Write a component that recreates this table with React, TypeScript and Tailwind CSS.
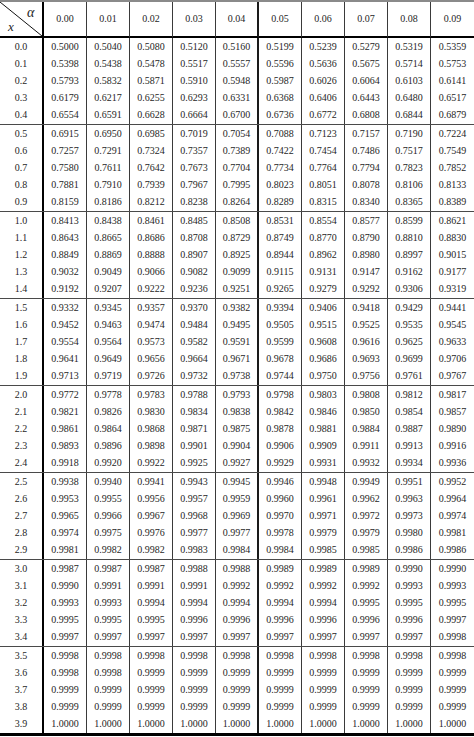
import React from "react";

function phi(x: number): number {
  const pdf = Math.exp(-x * x / 2) / Math.sqrt(2 * Math.PI);
  let term = x;
  let sum = x;
  for (let n = 1; n < 200; n++) {
    term = (term * x * x) / (2 * n + 1);
    sum += term;
    if (term < 1e-18) break;
  }
  return 0.5 + pdf * sum;
}

const cols = [0, 1, 2, 3, 4, 5, 6, 7, 8, 9];
const groups = [0, 1, 2, 3, 4, 5, 6, 7];

function borderFor(c: number): string {
  if (c === 9) return "";
  if (c === 4) return "border-r-2 border-[#1a1a1a]";
  return "border-r border-[#3a3a3a]";
}

function Row({ x }: { x: number }) {
  return (
    <div className="flex-1 grid grid-cols-[44px_repeat(10,43px)]">
      <div className="flex items-center justify-center border-r-2 border-black">
        {(x / 10).toFixed(1)}
      </div>
      {cols.map((c) => (
        <div key={c} className={`flex items-center justify-center ${borderFor(c)}`}>
          {phi(x / 10 + c / 100).toFixed(4)}
        </div>
      ))}
    </div>
  );
}

export default function App() {
  return (
    <div
      className="w-[474px] h-[737px] bg-white text-[#262626] text-[10px] leading-none overflow-hidden"
      style={{ fontFamily: '"Liberation Serif", "Times New Roman", serif' }}
    >
      <div className="h-[38px] grid grid-cols-[44px_repeat(10,43px)] border-t-2 border-[#8a8a8a]">
        <div className="relative border-r-2 border-b-2 border-black">
          <svg className="absolute inset-0 w-full h-full" viewBox="0 0 42 34" preserveAspectRatio="none">
            <line x1="0" y1="0" x2="42" y2="34" stroke="#111" strokeWidth="1" />
          </svg>
          <span className="absolute left-[27px] top-[4px] italic text-[14px]">α</span>
          <span className="absolute left-[8px] top-[18px] italic text-[13px]">x</span>
        </div>
        {cols.map((c) => (
          <div key={c} className={`flex items-center justify-center border-b-2 border-b-black ${borderFor(c)}`}>
            {(c / 100).toFixed(2)}
          </div>
        ))}
      </div>
      {groups.map((g) => (
        <div
          key={g}
          className={
            g === 7
              ? "h-[89px] flex flex-col border-b-[3px] border-black"
              : "h-[87px] flex flex-col border-b border-[#4a4a4a]"
          }
        >
          {[0, 1, 2, 3, 4].map((r) => (
            <Row key={r} x={g * 5 + r} />
          ))}
        </div>
      ))}
    </div>
  );
}
